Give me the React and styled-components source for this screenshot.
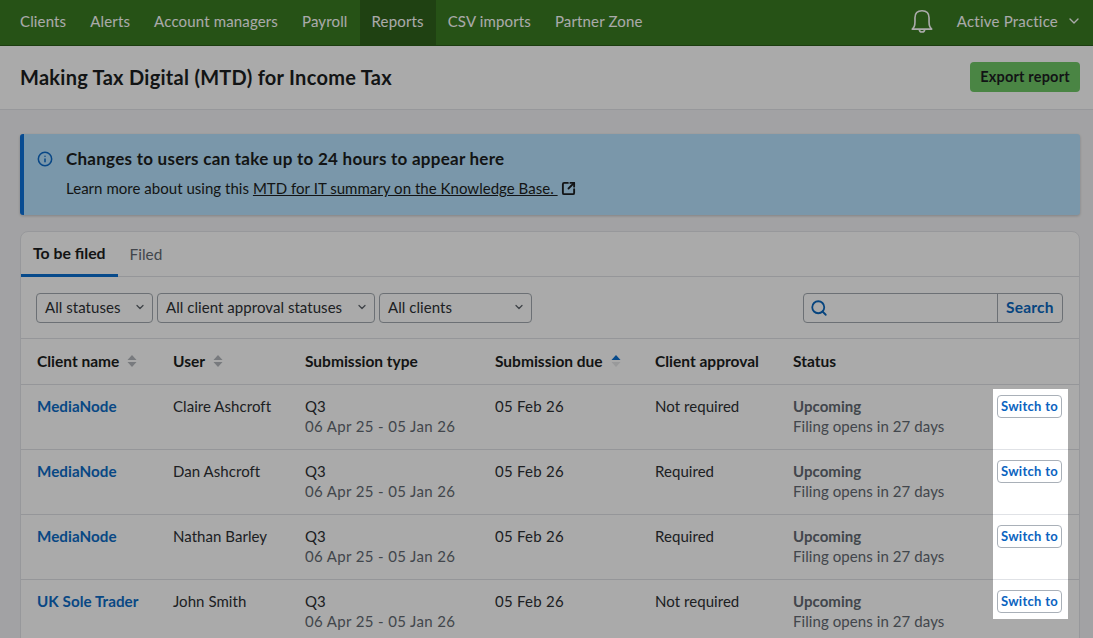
import styled, { createGlobalStyle } from "styled-components";
import { ChevronDown, Info, Search, SquareArrowOutUpRight } from "lucide-react";

const GlobalStyle = createGlobalStyle`
  html, body {
    margin: 0;
    padding: 0;
    background: #f4f4f6;
    font-family: Lato, "Liberation Sans", sans-serif;
    color: #1c1e21;
    overflow: hidden;
  }
  * { box-sizing: border-box; }
`;

const Page = styled.div`
  position: relative;
  height: 100vh;
  overflow: hidden;
`;

/* the dimmed page with a hole cut around the switch buttons */
const Spotlight = styled.div`
  position: absolute;
  left: 993px;
  top: 389px;
  width: 75px;
  height: 230px;
  box-shadow: 0 0 0 2000px rgba(0, 0, 0, 0.335);
`;

const Nav = styled.nav`
  display: flex;
  align-items: stretch;
  height: 46px;
  padding-left: 8px;
  background: #3a7c22;
  border-bottom: 1px solid #2a5c19;
`;

const NavItem = styled.a`
  display: flex;
  align-items: center;
  padding: 0 12px 3px;
  color: #fff;
  font-size: 15px;
  letter-spacing: 0.15px;
  background: ${props => (props.$active ? "#2f621c" : "transparent")};
`;

const NavRight = styled.div`
  display: flex;
  align-items: center;
  margin-left: auto;
  padding: 0 11px 3px 0;
  color: #fff;
  font-size: 15px;
  letter-spacing: 0.2px;
`;

const Bell = styled.svg`
  width: 24px;
  height: 26px;
  margin-right: 23px;
  fill: none;
  stroke: #fff;
  stroke-width: 1.5;
  stroke-linejoin: round;
`;

const Practice = styled.span`
  margin-right: 8px;
`;

const Header = styled.header`
  display: flex;
  align-items: center;
  justify-content: space-between;
  height: 64px;
  padding: 0 13px 2px 20px;
  background: #fff;
  border-bottom: 1px solid #e3e5e9;
`;

const Title = styled.h1`
  margin: 0;
  font-size: 20px;
  font-weight: 700;
  letter-spacing: 0.28px;
`;

const ExportButton = styled.button`
  width: 110px;
  height: 30px;
  padding: 0;
  border: 0;
  border-radius: 4px;
  background: #70c867;
  color: #1c1e21;
  font: 700 14.5px Lato, sans-serif;
  letter-spacing: 0.2px;
`;

const Content = styled.main`
  display: flex;
  flex-direction: column;
  gap: 16px;
  padding: 24px 13px 0 20px;
`;

const Alert = styled.section`
  display: flex;
  gap: 13px;
  height: 81px;
  padding: 15px 13px;
  background: #b8e3ff;
  border-left: 4px solid #0d72dc;
  border-radius: 3px;
  box-shadow: 0 1px 3px rgba(0, 0, 0, 0.2);
  svg { flex: none; }
`;

const AlertIcon = styled(Info)`
  margin-top: 2px;
  color: #0d6bc9;
`;

const AlertTitle = styled.div`
  font-size: 17px;
  font-weight: 700;
  line-height: 20px;
  letter-spacing: 0.26px;
`;

const AlertText = styled.div`
  margin-top: 9px;
  font-size: 15px;
  line-height: 20px;
  letter-spacing: 0.03px;
  display: flex;
  align-items: center;
  gap: 3px;
  white-space: pre;
`;

const AlertLink = styled.a`
  text-decoration: underline;
`;

const Card = styled.section`
  background: #fff;
  border: 1px solid #e3e5e9;
  border-radius: 8px 8px 0 0;
`;

const Tabs = styled.div`
  display: flex;
  height: 45px;
  border-bottom: 1px solid #e0e2e6;
`;

const Tab = styled.a`
  display: flex;
  align-items: center;
  height: 45px;
  padding: 0 12px 1px;
  font-size: ${props => (props.$active ? 15.8 : 15.4)}px;
  font-weight: ${props => (props.$active ? 700 : 400)};
  color: ${props => (props.$active ? "#1c1e21" : "#636a72")};
  border-bottom: ${props => (props.$active ? "3px solid #0b6fd1" : "0")};
`;

const Filters = styled.div`
  display: flex;
  align-items: center;
  gap: 4px;
  height: 62px;
  padding: 0 16px 0 15px;
  border-bottom: 1px solid #e0e2e6;
`;

const Select = styled.div`
  display: flex;
  align-items: center;
  justify-content: space-between;
  width: ${props => props.$width}px;
  height: 30px;
  padding: 0 6px 2px 8px;
  border: 1px solid #a3a9b0;
  border-radius: 4px;
  font-size: 15px;
  letter-spacing: 0.05px;
  color: #2d3034;
`;

const SelectArrow = styled(ChevronDown)`
  color: #5f656c;
`;

const SearchBox = styled.div`
  display: flex;
  margin-left: auto;
  width: 260px;
  height: 30px;
  border: 1px solid #a3a9b0;
  border-radius: 4px;
`;

const SearchField = styled.div`
  flex: 1;
  display: flex;
  align-items: center;
  padding-left: 6px;
  color: #0b68bf;
`;

const SearchButton = styled.div`
  display: flex;
  align-items: center;
  width: 65px;
  padding: 0 0 2px 8px;
  border-left: 1px solid #a3a9b0;
  color: #0b68bf;
  font-size: 15.5px;
  font-weight: 700;
  letter-spacing: 0.2px;
`;

const Table = styled.table`
  width: 100%;
  border-collapse: collapse;
  table-layout: fixed;
`;

const HeadCell = styled.th`
  height: 45px;
  padding: 0 0 0 ${props => (props.$first ? 16 : 0)}px;
  text-align: left;
  font-size: 15.5px;
  font-weight: 700;
  border-bottom: 1px solid #e0e2e6;
`;

const HeadInner = styled.span`
  display: inline-flex;
  align-items: center;
  gap: 8px;
`;

const Cell = styled.td`
  height: 65px;
  padding: 11px 0 0 ${props => (props.$first ? 16 : 0)}px;
  vertical-align: top;
  font-size: 15px;
  line-height: 20px;
  letter-spacing: 0.05px;
  color: #2d3034;
  border-bottom: 1px solid #e0e2e6;
`;

const ClientLink = styled.a`
  color: #0c6cc7;
  font-weight: 700;
  font-size: 15.2px;
`;

const Muted = styled.div`
  color: #636a72;
  letter-spacing: 0.08px;
`;

const DateRange = styled(Muted)`
  letter-spacing: 0.36px;
`;

const DueDate = styled.span`
  letter-spacing: 0.25px;
`;

const StatusName = styled.div`
  color: #636a72;
  font-weight: 700;
`;

const SwitchCell = styled(Cell)`
  padding: 10px 17px 0 0;
  text-align: right;
`;

const SwitchButton = styled.button`
  width: 65px;
  height: 23px;
  padding: 0;
  background: #fff;
  border: 1px solid #a9b0b8;
  border-radius: 4px;
  color: #0b63c0;
  font: 700 13px Lato, sans-serif;
  letter-spacing: 0.3px;
`;

const SortIcon = ({ active }) => (
  <svg width="10" height="14" viewBox="0 0 10 14">
    <path d="M5 1 L9.5 6 H0.5 Z" fill={active ? "#0b6fd1" : "#b4b8bd"} />
    <path d="M5 13 L9.5 8 H0.5 Z" fill={active ? "#e6e7e9" : "#b4b8bd"} />
  </svg>
);

const NAV_ITEMS = ["Clients", "Alerts", "Account managers", "Payroll", "Reports", "CSV imports", "Partner Zone"];

const ROWS = [
  { client: "MediaNode", user: "Claire Ashcroft", approval: "Not required" },
  { client: "MediaNode", user: "Dan Ashcroft", approval: "Required" },
  { client: "MediaNode", user: "Nathan Barley", approval: "Required" },
  { client: "UK Sole Trader", user: "John Smith", approval: "Not required" },
];

export default function App() {
  return (
    <Page>
      <GlobalStyle />
      <Nav>
        {NAV_ITEMS.map(item => (
          <NavItem key={item} $active={item === "Reports"}>{item}</NavItem>
        ))}
        <NavRight>
          <Bell viewBox="0 0 22 24">
            <path d="M2 19.5 C4 18 4.5 16 4.5 13 V9 C4.5 5 7 2.5 11 2.5 C15 2.5 17.5 5 17.5 9 V13 C17.5 16 18 18 20 19.5 Z" />
            <path d="M8.5 19.5 C8.5 23 13.5 23 13.5 19.5" />
          </Bell>
          <Practice>Active Practice</Practice>
          <ChevronDown size={16} />
        </NavRight>
      </Nav>
      <Header>
        <Title>Making Tax Digital (MTD) for Income Tax</Title>
        <ExportButton>Export report</ExportButton>
      </Header>
      <Content>
        <Alert>
          <AlertIcon size={16} strokeWidth={2.3} />
          <div>
            <AlertTitle>Changes to users can take up to 24 hours to appear here</AlertTitle>
            <AlertText>
              <span>Learn more about using this <AlertLink>MTD for IT summary on the Knowledge Base. </AlertLink></span>
              <SquareArrowOutUpRight size={15} strokeWidth={3} />
            </AlertText>
          </div>
        </Alert>
        <Card>
          <Tabs>
            <Tab $active>To be filed</Tab>
            <Tab>Filed</Tab>
          </Tabs>
          <Filters>
            <Select $width={117}>All statuses <SelectArrow size={12} strokeWidth={2.6} /></Select>
            <Select $width={218}>All client approval statuses <SelectArrow size={12} strokeWidth={2.6} /></Select>
            <Select $width={153}>All clients <SelectArrow size={12} strokeWidth={2.6} /></Select>
            <SearchBox>
              <SearchField><Search size={18} strokeWidth={2.4} /></SearchField>
              <SearchButton>Search</SearchButton>
            </SearchBox>
          </Filters>
          <Table>
            <colgroup>
              <col width="152" />
              <col width="132" />
              <col width="190" />
              <col width="160" />
              <col width="138" />
              <col width="200" />
              <col />
            </colgroup>
            <thead>
              <tr>
                <HeadCell $first><HeadInner>Client name <SortIcon /></HeadInner></HeadCell>
                <HeadCell><HeadInner>User <SortIcon /></HeadInner></HeadCell>
                <HeadCell>Submission type</HeadCell>
                <HeadCell><HeadInner>Submission due <SortIcon active /></HeadInner></HeadCell>
                <HeadCell>Client approval</HeadCell>
                <HeadCell>Status</HeadCell>
                <HeadCell />
              </tr>
            </thead>
            <tbody>
              {ROWS.map(row => (
                <tr key={row.user}>
                  <Cell $first><ClientLink>{row.client}</ClientLink></Cell>
                  <Cell>{row.user}</Cell>
                  <Cell>Q3<DateRange>06 Apr 25 - 05 Jan 26</DateRange></Cell>
                  <Cell><DueDate>05 Feb 26</DueDate></Cell>
                  <Cell>{row.approval}</Cell>
                  <Cell>
                    <StatusName>Upcoming</StatusName>
                    <Muted>Filing opens in 27 days</Muted>
                  </Cell>
                  <SwitchCell><SwitchButton>Switch to</SwitchButton></SwitchCell>
                </tr>
              ))}
            </tbody>
          </Table>
        </Card>
      </Content>
      <Spotlight />
    </Page>
  );
}
